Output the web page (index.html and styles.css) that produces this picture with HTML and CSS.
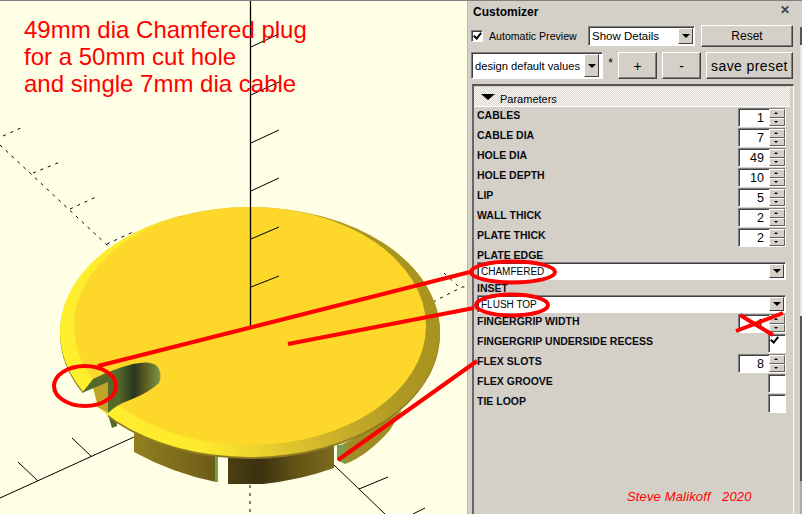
FILE: index.html
```html
<!DOCTYPE html>
<html lang="en">
<head>
  <meta charset="UTF-8">
  <title>Customizer</title>
  <link rel="stylesheet" href="styles.css">
</head>
<body>
  <div class="window">
    <!-- 3D view -->
    <div class="view">
      <svg class="scene" width="467" height="513" viewBox="0 1 467 513">
        <defs>
          <linearGradient id="rim" x1="60" y1="400" x2="440" y2="270" gradientUnits="userSpaceOnUse">
            <stop offset="0" stop-color="#fff02c"/>
            <stop offset="0.3" stop-color="#fdea2c"/>
            <stop offset="0.42" stop-color="#eed42e"/>
            <stop offset="0.65" stop-color="#c6ab2a"/>
            <stop offset="0.82" stop-color="#ad9722"/>
            <stop offset="1" stop-color="#a8921f"/>
          </linearGradient>
          <linearGradient id="wallLeft" x1="134" y1="0" x2="216" y2="0" gradientUnits="userSpaceOnUse">
            <stop offset="0" stop-color="#92801f"/>
            <stop offset="1" stop-color="#6c5b18"/>
          </linearGradient>
          <linearGradient id="wallMid" x1="228" y1="0" x2="334" y2="0" gradientUnits="userSpaceOnUse">
            <stop offset="0" stop-color="#4c3f11"/>
            <stop offset="0.3" stop-color="#3b3010"/>
            <stop offset="0.65" stop-color="#645416"/>
            <stop offset="1" stop-color="#7c6b1c"/>
          </linearGradient>
          <linearGradient id="cut" x1="90" y1="0" x2="161" y2="0" gradientUnits="userSpaceOnUse">
            <stop offset="0" stop-color="#55692a"/>
            <stop offset="0.4" stop-color="#556a2a"/>
            <stop offset="0.62" stop-color="#2a3620"/>
            <stop offset="0.78" stop-color="#5a5c20"/>
            <stop offset="1" stop-color="#7c9c4a"/>
          </linearGradient>
        </defs>

        <!-- grid behind the part -->
        <g class="axis">
          <path d="M0 498L134 437M72 438L92 457M18 462L38 481"/>
          <path d="M334 465L385 514M359 489L388 477M413 514L425 508"/>
        </g>
        <g class="axis dashed">
          <path d="M0 145L108 246M3 136L23 127M33 173L60 162M70 209L96 197M107 244L133 232"/>
          <path d="M444 273L458 286M433 302L462 287L466 287"/>
          <path d="M250 485V514"/>
        </g>

        <!-- underside walls and slots -->
        <path class="under" d="M345 464Q367 456 390 430L402 410L370 430L337 447Z"/>
        <path class="slot" d="M337 445H345V464L337 460Z"/>
        <path fill="url(#wallLeft)" d="M134 430V452Q172 473 216 482V450Z"/>
        <path class="slot" d="M215 455H218V482H215Z"/>
        <path fill="url(#wallMid)" d="M228 450V484H263Q300 480 334 468V440Z"/>
        <path class="slot dark" d="M109 418H117V426L112 428Z"/>

        <!-- disc -->
        <ellipse class="rim-shadow" cx="250" cy="334" rx="190" ry="125"/>
        <ellipse fill="url(#rim)" cx="250" cy="332" rx="190" ry="125"/>
        <ellipse class="face" cx="250" cy="326" rx="176" ry="119"/>

        <!-- cable notch -->
        <path class="gap" d="M82 393L93 387L98 407L108 415L104 426L70 412Z"/>
        <path class="wall" d="M93 387L108 381V413L98 407Z"/>
        <path fill="url(#cut)" d="M82 393L93 379Q113 369 133 364Q150 360 157 366Q163 374 159 383Q150 392 130 400Q116 405 108 413V382Z"/>

        <line class="axis-main" x1="250.5" y1="0" x2="250.5" y2="327"/>
        <path class="axis" d="M251 47L279 34M251 95L279 82M251 143L279 130M251 191L279 178M251 239L279 227M251 287L279 276"/>
      </svg>
    </div>

    <!-- customizer panel -->
    <div class="panel">
      <div class="title">
        <span>Customizer</span>
        <span class="close">✕</span>
      </div>

      <div class="bar top-bar">
        <label class="auto">
          <span class="check sunken small on"></span>
          <span>Automatic Preview</span>
        </label>
        <div class="combo sunken details">
          <span>Show Details</span>
          <span class="drop"></span>
        </div>
        <div class="btn reset">Reset</div>
      </div>

      <div class="bar preset-bar">
        <div class="combo sunken preset">
          <span>design default values</span>
          <span class="drop"></span>
        </div>
        <span class="star">*</span>
        <div class="btn plus">+</div>
        <div class="btn plus">-</div>
        <div class="btn save">save preset</div>
      </div>

      <div class="frame">
        <div class="group-head">
          <span class="arrow"></span>
          <span>Parameters</span>
        </div>

        <div class="row"><span class="name">CABLES</span><div class="spin sunken"><span class="val">1</span><span class="ud"><i class="up"></i><i class="down"></i></span></div></div>
        <div class="row"><span class="name">CABLE DIA</span><div class="spin sunken"><span class="val">7</span><span class="ud"><i class="up"></i><i class="down"></i></span></div></div>
        <div class="row"><span class="name">HOLE DIA</span><div class="spin sunken"><span class="val">49</span><span class="ud"><i class="up"></i><i class="down"></i></span></div></div>
        <div class="row"><span class="name">HOLE DEPTH</span><div class="spin sunken"><span class="val">10</span><span class="ud"><i class="up"></i><i class="down"></i></span></div></div>
        <div class="row"><span class="name">LIP</span><div class="spin sunken"><span class="val">5</span><span class="ud"><i class="up"></i><i class="down"></i></span></div></div>
        <div class="row"><span class="name">WALL THICK</span><div class="spin sunken"><span class="val">2</span><span class="ud"><i class="up"></i><i class="down"></i></span></div></div>
        <div class="row"><span class="name">PLATE THICK</span><div class="spin sunken"><span class="val">2</span><span class="ud"><i class="up"></i><i class="down"></i></span></div></div>

        <div class="name stacked">PLATE EDGE</div>
        <div class="combo sunken wide"><span>CHAMFERED</span><span class="drop"></span></div>
        <div class="name stacked">INSET</div>
        <div class="combo sunken wide"><span>FLUSH TOP</span><span class="drop"></span></div>

        <div class="row"><span class="name">FINGERGRIP WIDTH</span><div class="spin sunken"><span class="val">1</span><span class="ud"><i class="up"></i><i class="down"></i></span></div></div>
        <div class="row"><span class="name">FINGERGRIP UNDERSIDE RECESS</span><span class="check sunken on"></span></div>
        <div class="row"><span class="name">FLEX SLOTS</span><div class="spin sunken"><span class="val">8</span><span class="ud"><i class="up"></i><i class="down"></i></span></div></div>
        <div class="row"><span class="name">FLEX GROOVE</span><span class="check sunken"></span></div>
        <div class="row"><span class="name">TIE LOOP</span><span class="check sunken"></span></div>
      </div>
    </div>
    <div class="edge"></div>

    <!-- red annotations drawn over the screenshot -->
    <div class="note">49mm dia Chamfered plug<br>for a 50mm cut hole<br>and single 7mm dia cable</div>
    <div class="credit">Steve Malikoff   2020</div>
    <svg class="marks" width="802" height="514" viewBox="0 0 802 514">
      <path d="M98 366L470 272M288 344L474 308M338 460L477 361"/>
      <ellipse cx="85" cy="386" rx="31" ry="20"/>
      <ellipse cx="513" cy="272" rx="42" ry="10.5"/>
      <ellipse cx="512" cy="305" rx="36" ry="10.5"/>
      <path d="M740 315L773 335M736 331L783 313"/>
    </svg>
  </div>
</body>
</html>
```

FILE: styles.css
```css
body {
  margin: 0;
  background: #d4d0c8;
  font-family: "Liberation Sans", Arial, sans-serif;
  font-size: 11px;
  color: #000;
}
.window {
  position: relative;
  display: flex;
  width: 802px;
  height: 514px;
  overflow: hidden;
  border-top: 1px solid #808080;
  box-sizing: border-box;
}

/* 3D view */
.view {
  width: 467px;
  background: #ffffe5;
  flex-shrink: 0;
}
.scene {
  display: block;
}
.axis {
  fill: none;
  stroke: #000;
  stroke-width: 1;
}
.axis.dashed {
  stroke-dasharray: 3 5;
}
.axis-main {
  stroke: #000;
  stroke-width: 1.3;
}
.under {
  fill: #a08c24;
}
.slot {
  fill: #7a9c4c;
}
.slot.dark {
  fill: #55692a;
}
.rim-shadow {
  fill: #8f7c20;
}
.face {
  fill: #fdd82b;
}
.gap {
  fill: #ffffe5;
}
.wall {
  fill: #bfa52a;
}

/* customizer panel */
.panel {
  flex: 1;
  display: flex;
  flex-direction: column;
  padding: 0 6px 0 3px;
  border-left: 1px solid #bdbab3;
  background: #d4d0c8;
}
.edge {
  width: 2px;
  background: linear-gradient(#d4d0c8 0 26px, #555 26px 44px, #e8e6e2 44px 315px, #555 315px 480px, #aaa 480px);
}
.title {
  display: flex;
  justify-content: space-between;
  align-items: center;
  height: 22px;
  padding: 0 4px 0 2px;
  font-size: 12px;
  font-weight: bold;
}
.close {
  padding-bottom: 4px;
  font-size: 12px;
  color: #404040;
}
.bar {
  display: flex;
  align-items: stretch;
}
.top-bar {
  height: 22px;
  margin-top: 2px;
}
.preset-bar {
  height: 27px;
  margin-top: 5px;
}
.auto {
  display: flex;
  align-items: center;
  gap: 6px;
  width: 117px;
  font-size: 10.6px;
  box-sizing: border-box;
}
.sunken {
  box-sizing: border-box;
  background: #fff;
  border: 1px solid;
  border-color: #808080 #fff #fff #808080;
  box-shadow: inset 1px 1px 0 #404040;
}
.btn {
  display: flex;
  align-items: center;
  justify-content: center;
  box-sizing: border-box;
  border: 1px solid;
  border-color: #fff #404040 #404040 #fff;
  box-shadow: inset -1px -1px 0 #808080;
  font-size: 12px;
  white-space: nowrap;
}
.reset {
  width: 92px;
  margin-left: 6px;
}
.plus {
  width: 39px;
  margin-right: 5px;
  font-size: 14px;
}
.save {
  width: 87px;
  font-size: 14px;
  letter-spacing: 0.4px;
}
.star {
  width: 15px;
  text-align: center;
  font-size: 12px;
  line-height: 22px;
}
.combo {
  display: flex;
  align-items: center;
  justify-content: space-between;
  padding: 1px 1px 1px 3px;
  white-space: nowrap;
}
.details {
  width: 107px;
  height: 20px;
  margin-top: 1px;
  font-size: 11.5px;
}
.preset {
  width: 132px;
  font-size: 11.2px;
  padding-right: 3px;
}
.wide {
  width: 309px;
  height: 18px;
  font-size: 10px;
  padding-left: 3px;
}
.drop {
  position: relative;
  width: 15px;
  height: 100%;
  box-sizing: border-box;
  border: 1px solid;
  border-color: #fff #404040 #404040 #fff;
  background: #d4d0c8;
}
.drop::after {
  content: "";
  position: absolute;
  left: 3px;
  top: 50%;
  margin-top: -2px;
  border: 4px solid transparent;
  border-bottom: 0;
  border-top-color: #000;
}

/* parameter list */
.frame {
  flex: 1;
  width: 322px;
  margin: 5px 0 0 1px;
  padding: 1px 7px 0 3px;
  border-left: 2px solid #666;
  border-top: 2px solid #555;
  border-right: 1px solid #fff;
  box-sizing: border-box;
}
.group-head {
  display: flex;
  align-items: center;
  gap: 5px;
  height: 20px;
  margin: 0 -4px 0 -3px;
  padding: 4px 0 0 7px;
  border-bottom: 1px solid #fff;
  box-sizing: border-box;
  background: repeating-conic-gradient(#fff 0 25%, #d4d0c8 0 50%) 0 0 / 2px 2px;
}
.arrow {
  border: 7px solid transparent;
  border-bottom: 0;
  border-top-color: #000;
  border-top-width: 6px;
  margin-bottom: 4px;
}
.row {
  display: flex;
  justify-content: space-between;
  align-items: flex-start;
  height: 20px;
}
.name {
  font-size: 10.5px;
  font-weight: bold;
  line-height: 16px;
  color: #0a0a14;
  white-space: nowrap;
}
.stacked {
  height: 15px;
}
.spin {
  display: flex;
  width: 48px;
  height: 19px;
  margin-top: 1px;
}
.val {
  flex: 1;
  text-align: right;
  padding-right: 5px;
  font-size: 12.5px;
  line-height: 18px;
}
.ud {
  display: flex;
  flex-direction: column;
  width: 16px;
  background: #d4d0c8;
}
.ud i {
  position: relative;
  flex: 1;
  box-sizing: border-box;
  border: 1px solid;
  border-color: #fff #606060 #606060 #fff;
}
.ud i::after {
  content: "";
  position: absolute;
  left: 4px;
  top: 2px;
  border: 2.5px solid transparent;
}
.ud .up::after {
  border-top: 0;
  border-bottom-color: #000;
}
.ud .down::after {
  border-bottom: 0;
  border-top-color: #000;
}
.check {
  position: relative;
  display: block;
  width: 18px;
  height: 19px;
  margin-top: 1px;
}
.check.small {
  width: 12px;
  height: 12px;
  margin: 0;
}
.check.on::after {
  content: "";
  position: absolute;
  left: 3px;
  top: 0;
  width: 3px;
  height: 6px;
  border: solid #000;
  border-width: 0 2px 2px 0;
  transform: rotate(40deg);
}

/* annotations */
.note {
  position: absolute;
  left: 24px;
  top: 15px;
  font-size: 24px;
  line-height: 27px;
  color: #f00;
}
.credit {
  position: absolute;
  left: 627px;
  top: 488px;
  font-style: italic;
  font-size: 13px;
  letter-spacing: 0.15px;
  white-space: pre;
  color: #f00;
}
.marks {
  position: absolute;
  left: 0;
  top: -1px;
  pointer-events: none;
}
.marks path,
.marks ellipse {
  fill: none;
  stroke: #f00;
  stroke-width: 4;
}
```
